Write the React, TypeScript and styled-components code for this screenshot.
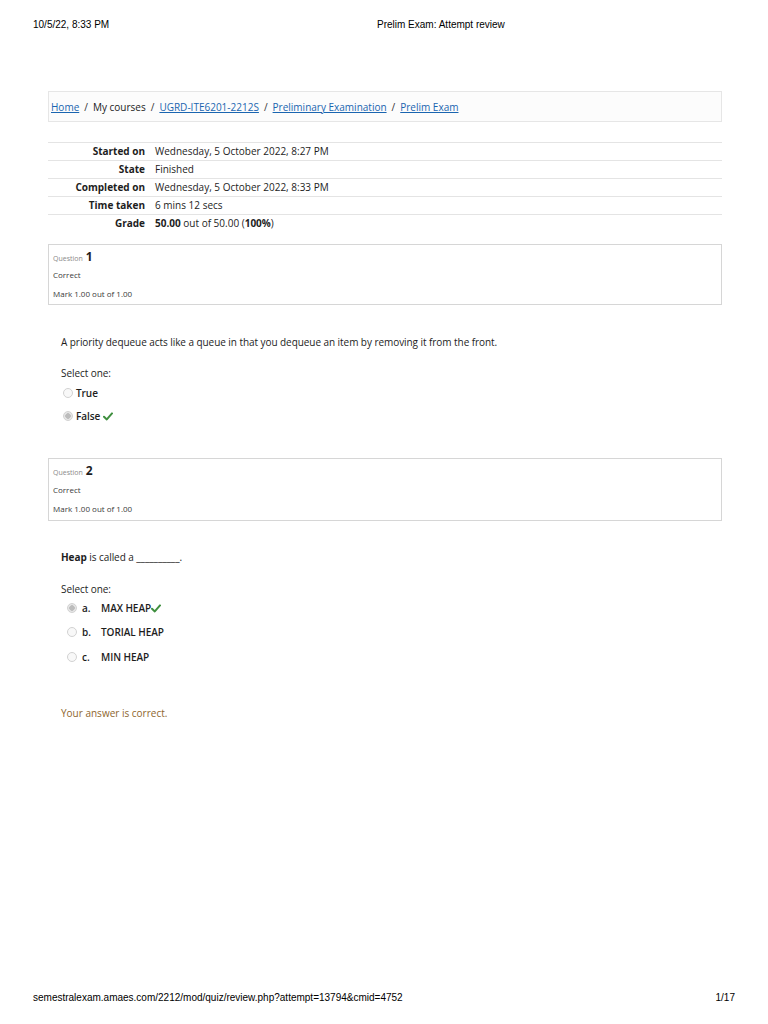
import React from "react";
import styled, { createGlobalStyle } from "styled-components";

const Global = createGlobalStyle`
  html, body { margin: 0; padding: 0; background: #fff; }
  body { font-family: "Open Sans", "Noto Sans", sans-serif; color: #1d2125; }
`;

const Page = styled.div`
  width: 768px;
  height: 1024px;
  display: flex;
  flex-direction: column;
  box-sizing: border-box;
`;

const PrintBar = styled.div`
  display: flex;
  align-items: center;
  height: 14px;
  padding: 17px 33px 0 33px;
  font-family: "Liberation Sans", Arial, sans-serif;
  font-size: 10px;
  color: #000;
`;

const PrintLeft = styled.div`
  width: 344px;
`;

const PrintTitle = styled.div`
  flex: 1;
`;

const Main = styled.div`
  flex: 1;
  display: flex;
  flex-direction: column;
  padding: 0 46px 0 48px;
`;

const Breadcrumb = styled.nav`
  margin-top: 60px;
  height: 31px;
  box-sizing: border-box;
  border: 1px solid #e6e6e6;
  background: #fcfcfc;
  display: flex;
  align-items: center;
  padding-left: 2px;
  font-size: 10px;
  font-weight: 500;
  color: #222;
`;

const Crumb = styled.a`
  color: #1a65b0;
  text-decoration: underline;
`;

const Sep = styled.span`
  margin: 0 5px;
  color: #333;
`;

const Summary = styled.div`
  margin-top: 20px;
  display: grid;
  grid-template-columns: 102px 1fr;
`;

const Cell = styled.div<{ $label?: boolean }>`
  height: 18px;
  box-sizing: border-box;
  border-top: 1px solid #e4e4e4;
  display: flex;
  align-items: center;
  padding-bottom: 2px;
  justify-content: ${(p) => (p.$label ? "flex-end" : "flex-start")};
  padding-left: ${(p) => (p.$label ? "0" : "5px")};
  padding-right: ${(p) => (p.$label ? "5px" : "0")};
  font-size: 10px;
  font-weight: ${(p) => (p.$label ? 700 : 500)};
  color: #1d1d1d;
`;

const Bold = styled.b`
  font-weight: 700;
`;

const InfoBox = styled.div<{ $top: number; $h: number }>`
  margin-top: ${(p) => p.$top}px;
  border: 1px solid #d6d6d6;
  box-sizing: border-box;
  height: ${(p) => p.$h}px;
  padding: 3px 4px 0 4px;
  display: flex;
  flex-direction: column;
  font-size: 8px;
  font-weight: 400;
  color: #3a3a3a;
`;

const QNo = styled.div`
  height: 18px;
  display: flex;
  align-items: baseline;
  color: #8a8a8a;
  font-size: 7px;
`;

const QNum = styled.span`
  font-size: 12px;
  font-weight: 700;
  color: #1d1d1d;
  margin-left: 3px;
`;

const InfoLine = styled.div<{ $h: number }>`
  height: ${(p) => p.$h}px;
  display: flex;
  align-items: center;
`;

const Content = styled.div<{ $top: number }>`
  margin-top: ${(p) => p.$top}px;
  padding-left: 13px;
  font-size: 10px;
  font-weight: 500;
  letter-spacing: -0.06px;
  color: #1d1d1d;
`;

const QText = styled.div`
  height: 16px;
  display: flex;
  align-items: center;
`;

const SelectOne = styled.div<{ $top: number }>`
  margin-top: ${(p) => p.$top}px;
  height: 16px;
  display: flex;
  align-items: center;
`;

const Option = styled.div<{ $indent: number; $gap: number }>`
  margin-top: ${(p) => p.$gap}px;
  height: 16px;
  display: flex;
  align-items: center;
  padding-left: ${(p) => p.$indent}px;
  font-weight: 600;
`;

const Radio = styled.span<{ $checked?: boolean }>`
  width: 8px;
  height: 8px;
  border-radius: 50%;
  border: 1px solid #d2d2d2;
  background: ${(p) => (p.$checked ? "radial-gradient(circle, #bcbcbc 0 2.5px, #e6e6e6 3px)" : "#f8f8f8")};
  margin-right: 3px;
  flex-shrink: 0;
`;

const Letter = styled.span`
  width: 19px;
  margin-left: 2px;
`;

const Correct = styled.div`
  margin-top: 40px;
  color: #8e662e;
  font-size: 10px;
  font-weight: 500;
  padding-left: 13px;
  height: 16px;
  display: flex;
  align-items: center;
`;

const Footer = styled.div`
  display: flex;
  align-items: center;
  justify-content: space-between;
  height: 14px;
  padding: 0 33px 20px 33px;
  font-family: "Liberation Sans", Arial, sans-serif;
  font-size: 10px;
  color: #000;
`;

const CheckMark = styled.svg<{ $ml: number }>`
  margin-left: ${(p) => p.$ml}px;
  flex-shrink: 0;
`;

const Check = ({ ml = 3 }: { ml?: number }) => (
  <CheckMark $ml={ml} width="10" height="9" viewBox="0 0 10 9">
    <path d="M1 4.8 L3.8 7.4 L9 1.4" fill="none" stroke="#3f8f3f" strokeWidth="2" strokeLinecap="round" strokeLinejoin="round" />
  </CheckMark>
);

const rows: [string, React.ReactNode][] = [
  ["Started on", "Wednesday, 5 October 2022, 8:27 PM"],
  ["State", "Finished"],
  ["Completed on", "Wednesday, 5 October 2022, 8:33 PM"],
  ["Time taken", "6 mins 12 secs"],
  [
    "Grade",
    <>
      <Bold>50.00</Bold>&nbsp;out of 50.00 (<Bold>100%</Bold>)
    </>,
  ],
];

export default function App() {
  return (
    <Page>
      <Global />
      <PrintBar>
        <PrintLeft>10/5/22, 8:33 PM</PrintLeft>
        <PrintTitle>Prelim Exam: Attempt review</PrintTitle>
      </PrintBar>
      <Main>
        <Breadcrumb>
          <Crumb>Home</Crumb>
          <Sep>/</Sep>
          <span>My courses</span>
          <Sep>/</Sep>
          <Crumb>UGRD-ITE6201-2212S</Crumb>
          <Sep>/</Sep>
          <Crumb>Preliminary Examination</Crumb>
          <Sep>/</Sep>
          <Crumb>Prelim Exam</Crumb>
        </Breadcrumb>
        <Summary>
          {rows.map(([k, v]) => (
            <React.Fragment key={k}>
              <Cell $label>{k}</Cell>
              <Cell>{v}</Cell>
            </React.Fragment>
          ))}
        </Summary>
        <InfoBox $top={12} $h={61}>
          <QNo>
            Question<QNum>1</QNum>
          </QNo>
          <InfoLine $h={16}>Correct</InfoLine>
          <InfoLine $h={22}>Mark 1.00 out of 1.00</InfoLine>
        </InfoBox>
        <Content $top={29}>
          <QText>A priority dequeue acts like a queue in that you dequeue an item by removing it from the front.</QText>
          <SelectOne $top={15}>Select one:</SelectOne>
          <Option $gap={4} $indent={2}>
            <Radio />
            True
          </Option>
          <Option $gap={7} $indent={2}>
            <Radio $checked />
            False
            <Check />
          </Option>
        </Content>
        <InfoBox $top={34} $h={63}>
          <QNo>
            Question<QNum>2</QNum>
          </QNo>
          <InfoLine $h={18}>Correct</InfoLine>
          <InfoLine $h={20}>Mark 1.00 out of 1.00</InfoLine>
        </InfoBox>
        <Content $top={28}>
          <QText>
            <Bold>Heap</Bold>&nbsp;is called a __________.
          </QText>
          <SelectOne $top={16}>Select one:</SelectOne>
          <Option $gap={3} $indent={6}>
            <Radio $checked />
            <Letter>a.</Letter>MAX HEAP
            <Check ml={0} />
          </Option>
          <Option $gap={8} $indent={6}>
            <Radio />
            <Letter>b.</Letter>TORIAL HEAP
          </Option>
          <Option $gap={9} $indent={6}>
            <Radio />
            <Letter>c.</Letter>MIN HEAP
          </Option>
        </Content>
        <Correct>Your answer is correct.</Correct>
      </Main>
      <Footer>
        <span>semestralexam.amaes.com/2212/mod/quiz/review.php?attempt=13794&amp;cmid=4752</span>
        <span>1/17</span>
      </Footer>
    </Page>
  );
}
